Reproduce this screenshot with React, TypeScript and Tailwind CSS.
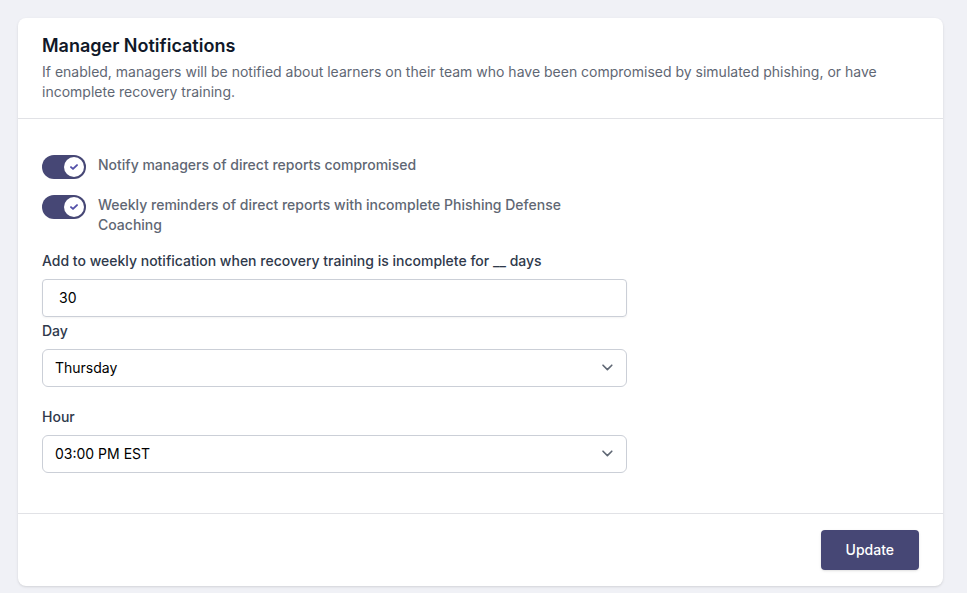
import { useState } from "react";
import type { ReactNode } from "react";

type ToggleProps = {
  id: string;
  label: string;
  checked: boolean;
  onChange: (checked: boolean) => void;
};

function Toggle({ id, label, checked, onChange }: ToggleProps) {
  return (
    <div className="flex items-start gap-3">
      <span className="relative flex h-6 w-11 shrink-0">
        <input
          id={id}
          type="checkbox"
          role="switch"
          checked={checked}
          onChange={(e) => onChange(e.target.checked)}
          className="peer h-6 w-11 cursor-pointer appearance-none rounded-full bg-gray-300 checked:bg-[#464775]"
        />
        <span className="pointer-events-none absolute top-0.5 left-0.5 flex size-5 items-center justify-center rounded-full bg-white text-transparent peer-checked:translate-x-5 peer-checked:text-[#5350a8]">
          <svg
            viewBox="0 0 12 12"
            fill="none"
            stroke="currentColor"
            strokeWidth="1.9"
            strokeLinecap="round"
            strokeLinejoin="round"
            className="size-3"
          >
            <path d="M3 6.1L5 7.9L9 4.1" />
          </svg>
        </span>
      </span>
      <label
        htmlFor={id}
        className="cursor-pointer text-sm font-medium text-[#5f6774]"
      >
        {label}
      </label>
    </div>
  );
}

type SelectProps = {
  id: string;
  label: string;
  value: string;
  options: string[];
  onChange: (value: string) => void;
};

function Field({ id, label, children }: { id: string; label: string; children: ReactNode }) {
  return (
    <div className="flex flex-col gap-2">
      <label htmlFor={id} className="text-sm font-medium text-[#2f394b]">
        {label}
      </label>
      {children}
    </div>
  );
}

function SelectField({ id, label, value, options, onChange }: SelectProps) {
  return (
    <Field id={id} label={label}>
      <div className="relative">
        <select
          id={id}
          value={value}
          onChange={(e) => onChange(e.target.value)}
          className="block w-full appearance-none rounded-md border border-[#cbcfd7] bg-white py-2 pr-10 pl-3 text-sm text-black"
        >
          {options.map((option) => (
            <option key={option}>{option}</option>
          ))}
        </select>
        <svg
          viewBox="0 0 20 20"
          fill="none"
          stroke="currentColor"
          strokeWidth="1.6"
          strokeLinecap="round"
          strokeLinejoin="round"
          className="pointer-events-none absolute inset-y-0 right-2.5 my-auto size-5 text-[#5f6774]"
        >
          <path d="M6 7.2l4.4 4.4 4.4-4.4" />
        </svg>
      </div>
    </Field>
  );
}

const days = ["Monday", "Tuesday", "Wednesday", "Thursday", "Friday"];
const hours = ["09:00 AM EST", "12:00 PM EST", "03:00 PM EST", "06:00 PM EST"];

export default function App() {
  const [notify, setNotify] = useState(true);
  const [weekly, setWeekly] = useState(true);
  const [threshold, setThreshold] = useState("30");
  const [day, setDay] = useState("Thursday");
  const [hour, setHour] = useState("03:00 PM EST");

  return (
    <main className="min-h-screen bg-[#f0f1f6] pt-[18px] pr-6 pb-[7px] pl-[18px] font-['Inter',sans-serif]">
      <form
        onSubmit={(e) => e.preventDefault()}
        className="rounded-lg bg-white shadow"
      >
        <header className="border-b border-[#e1e2e6] px-6 py-4">
          <h3 className="text-lg leading-6 font-semibold text-gray-900">
            Manager Notifications
          </h3>
          <p className="mt-1 text-sm text-[#5f6774]">
            If enabled, managers will be notified about learners on their team
            who have been compromised by simulated phishing, or have incomplete
            recovery training.
          </p>
        </header>

        <div className="px-6 pt-9 pb-10">
          <div className="w-2/3">
            <div className="flex flex-col gap-4">
              <Toggle
                id="notify-managers"
                label="Notify managers of direct reports compromised"
                checked={notify}
                onChange={setNotify}
              />
              <Toggle
                id="weekly-reminders"
                label="Weekly reminders of direct reports with incomplete Phishing Defense Coaching"
                checked={weekly}
                onChange={setWeekly}
              />
              <Field
                id="threshold"
                label="Add to weekly notification when recovery training is incomplete for __ days"
              >
                <input
                  id="threshold"
                  type="text"
                  inputMode="numeric"
                  value={threshold}
                  onChange={(e) => setThreshold(e.target.value)}
                  className="block w-full rounded border border-[#cbcfd7] px-4 py-2 text-sm text-black shadow-xs"
                />
              </Field>
            </div>
            <div className="mt-1 flex flex-col gap-5">
              <SelectField id="day" label="Day" value={day} options={days} onChange={setDay} />
              <SelectField id="hour" label="Hour" value={hour} options={hours} onChange={setHour} />
            </div>
          </div>
        </div>

        <footer className="flex justify-end border-t border-[#e1e2e6] px-6 py-4">
          <button
            type="submit"
            className="cursor-pointer rounded border border-transparent bg-[#464775] px-6 py-[9px] text-sm font-medium text-white shadow-sm"
          >
            Update
          </button>
        </footer>
      </form>
    </main>
  );
}
